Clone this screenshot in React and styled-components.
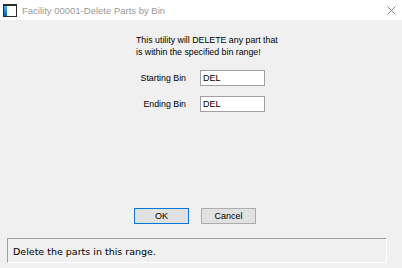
import React from "react";
import styled, { createGlobalStyle } from "styled-components";

const Global = createGlobalStyle`
  html, body { margin: 0; padding: 0; background: #f0f0f0; }
  body { width: 402px; height: 268px; overflow: hidden; font-family: "Liberation Sans", Arial, sans-serif; }
  #root { width: 402px; height: 268px; }
`;

const Window = styled.div`
  width: 402px;
  height: 268px;
  display: flex;
  flex-direction: column;
  background: #f0f0f0;
`;

const TitleBar = styled.div`
  height: 20px;
  background: #ffffff;
  display: flex;
  align-items: center;
  padding-left: 3px;
  padding-right: 6px;
  box-sizing: border-box;
`;

const TitleText = styled.span`
  margin-left: 5px;
  font-size: 9.5px;
  color: #9a9a9a;
  flex: 1;
  white-space: nowrap;
`;

const Body = styled.div`
  flex: 1;
  display: flex;
  flex-direction: column;
  padding-top: 14px;
`;

const Message = styled.div`
  padding-left: 136px;
  font-size: 8.8px;
  line-height: 12px;
  color: #000;
`;

const Form = styled.div`
  margin-top: 12px;
  padding-left: 126px;
  display: grid;
  grid-template-columns: 60px 65px;
  column-gap: 14px;
  row-gap: 10px;
  align-items: center;
`;

const Label = styled.label`
  font-size: 8.8px;
  color: #000;
  text-align: right;
  white-space: nowrap;
`;

const Input = styled.div`
  height: 16px;
  box-sizing: border-box;
  border: 1px solid #a0a0a0;
  background: #fff;
  font-size: 9px;
  display: flex;
  align-items: center;
  padding-left: 2px;
  color: #000;
`;

const Buttons = styled.div`
  margin-top: auto;
  padding-left: 134px;
  display: flex;
  gap: 12px;
`;

const Button = styled.div`
  width: 55px;
  height: 16px;
  box-sizing: border-box;
  border: 1px solid ${(p) => (p.$default ? "#0078d7" : "#adadad")};
  background: #e1e1e1;
  font-size: 9px;
  color: #000;
  display: flex;
  align-items: center;
  justify-content: center;
`;

const StatusBar = styled.div`
  margin: 14px 15px 5px 7px;
  height: 25px;
  box-sizing: border-box;
  border-top: 1px solid #a0a0a0;
  border-left: 1px solid #a0a0a0;
  border-right: 1px solid #ffffff;
  border-bottom: 1px solid #ffffff;
  display: flex;
  align-items: center;
  padding-left: 5px;
  padding-top: 2px;
  font-family: "DejaVu Sans", "Liberation Sans", sans-serif;
  font-size: 9.5px;
  color: #000;
`;

const AppIcon = () => (
  <svg width="14" height="13" viewBox="0 0 14 13">
    <defs>
      <linearGradient id="blu" x1="0" y1="0" x2="0" y2="1">
        <stop offset="0" stopColor="#4fb3f5" />
        <stop offset="1" stopColor="#0a5fb4" />
      </linearGradient>
    </defs>
    <rect x="0.5" y="0.5" width="13" height="12" fill="#fff" stroke="#2b2b2b" />
    <rect x="0" y="0" width="14" height="2" fill="#2b2b2b" />
    <rect x="1" y="2" width="3" height="10" fill="url(#blu)" />
  </svg>
);

const CloseIcon = () => (
  <svg width="9" height="9" viewBox="0 0 9 9">
    <path d="M0.5 0.5 L8.5 8.5 M8.5 0.5 L0.5 8.5" stroke="#777" strokeWidth="0.9" fill="none" />
  </svg>
);

export default function App() {
  return (
    <>
      <Global />
      <Window>
        <TitleBar>
          <AppIcon />
          <TitleText>Facility 00001-Delete Parts by Bin</TitleText>
          <CloseIcon />
        </TitleBar>
        <Body>
          <Message>
            This utility will DELETE any part that
            <br />
            is within the specified bin range!
          </Message>
          <Form>
            <Label>Starting Bin</Label>
            <Input>DEL</Input>
            <Label>Ending Bin</Label>
            <Input>DEL</Input>
          </Form>
          <Buttons>
            <Button $default>OK</Button>
            <Button>Cancel</Button>
          </Buttons>
          <StatusBar>Delete the parts in this range.</StatusBar>
        </Body>
      </Window>
    </>
  );
}
